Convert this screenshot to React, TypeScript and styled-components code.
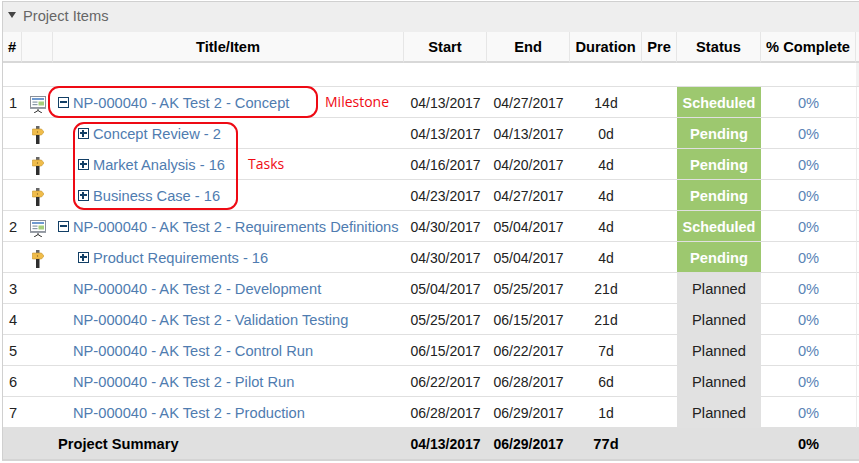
import React from "react";
import styled, { createGlobalStyle } from "styled-components";

const Global = createGlobalStyle`
  html, body { margin: 0; padding: 0; background: #fff; width: 859px; height: 463px; overflow: hidden; }
  * { box-sizing: border-box; }
`;

const Panel = styled.section`
  position: relative;
  width: 859px;
  height: 463px;
  padding: 1px 0 0 2px;
  font-family: "Liberation Sans", Arial, sans-serif;
  font-size: 14.67px;
`;
const Frame = styled.div`
  width: 857px;
  height: 460px;
  border-top: 1px solid #d0d0d0;
  border-left: 1px solid #d0d0d0;
  border-bottom: 2px solid #d4d4d4;
`;
const TitleBar = styled.header`
  height: 30px;
  background: #eeeeee;
  display: flex;
  align-items: center;
  gap: 7px;
  padding: 0 0 2px 5px;
  color: #666;
`;
const Caret = styled.span`
  width: 0;
  height: 0;
  border-left: 4px solid transparent;
  border-right: 4px solid transparent;
  border-top: 6px solid #444;
  margin-top: -2px;
`;
const Table = styled.table`
  width: 856px;
  table-layout: fixed;
  border-collapse: separate;
  border-spacing: 0;
`;
const Th = styled.th<{ $w: number }>`
  width: ${(p) => p.$w}px;
  height: 31px;
  padding: 0;
  background: #f9f9f9;
  font-weight: bold;
  color: #000;
  text-align: center;
  border-right: 1px solid #e6e6e6;
  border-bottom: 2px solid #d8d8d8;
`;
const ThEnd = styled.th`
  width: 3px;
  padding: 0;
  background: #f9f9f9;
  border-bottom: 2px solid #d8d8d8;
`;
const Spacer = styled.td`
  height: 24px;
  padding: 0;
  border-bottom: 1px solid #e0e0e0;
`;
const SpacerEnd = styled.td`
  padding: 0;
  background: #f2f2f2;
  border-bottom: 1px solid #e0e0e0;
`;
const RowEnd = styled.td`
  padding: 0;
  border-left: 1px solid #ececec;
  border-bottom: 1px solid #e0e0e0;
`;
const Td = styled.td<{ $link?: boolean }>`
  height: 31px;
  padding: 1px 0 0;
  color: ${(p) => (p.$link ? "#5a84b6" : "#222")};
  text-align: center;
  border-bottom: 1px solid #e0e0e0;
  white-space: nowrap;
  font-size: ${(p) => (p.$link ? "14.67px" : "14px")};
`;
const NumCell = styled(Td)`
  text-align: left;
  padding-left: 6px;
  font-size: 14.67px;
`;
const IconCell = styled(Td)`
  padding: 0;
`;
const TitleCell = styled(Td)<{ $child?: boolean }>`
  text-align: left;
  padding-left: ${(p) => (p.$child ? "25px" : "5px")};
  color: #4f7cb0;
  font-size: 14.67px;
`;
const TitleInner = styled.span`
  display: flex;
  align-items: center;
  gap: 4px;
`;
const Toggle = styled.span`
  position: relative;
  flex: none;
  width: 11px;
  height: 11px;
  border: 1.5px solid #123f66;
  background: #fff;
  &::before {
    content: "";
    position: absolute;
    left: 1px;
    right: 1px;
    top: 3px;
    height: 2px;
    background: #123f66;
  }
`;
const TogglePlus = styled(Toggle)`
  &::after {
    content: "";
    position: absolute;
    top: 1px;
    bottom: 1px;
    left: 3px;
    width: 2px;
    background: #123f66;
  }
`;
const TitleSpacer = styled.span`
  width: 11px;
  flex: none;
`;
const StatusCell = styled(Td)<{ $kind: string }>`
  background: ${(p) => (p.$kind === "Planned" ? "#e1e1e1" : "#9dc86f")};
  color: ${(p) => (p.$kind === "Planned" ? "#222" : "#fff")};
  font-weight: ${(p) => (p.$kind === "Planned" ? "normal" : "bold")};
  font-size: ${(p) => (p.$kind === "Scheduled" ? "14.4px" : "14.67px")};
  border-bottom-color: ${(p) => (p.$kind === "Planned" ? "#e1e1e1" : "#e0e0e0")};
`;
const FooterCell = styled.td<{ $small?: boolean }>`
  height: 31px;
  padding: 1px 0 0;
  background: #e0e0e0;
  font-weight: bold;
  color: #000;
  text-align: center;
  font-size: ${(p) => (p.$small ? "14px" : "14.67px")};
`;
const FooterTitle = styled(FooterCell)`
  text-align: left;
  padding-left: 5px;
`;
const Callout = styled.div<{ $l: number; $t: number; $w: number; $h: number }>`
  position: absolute;
  left: ${(p) => p.$l}px;
  top: ${(p) => p.$t}px;
  width: ${(p) => p.$w}px;
  height: ${(p) => p.$h}px;
  border: 2px solid #ee0a14;
  border-radius: 11px;
`;
const Note = styled.div<{ $l: number; $t: number }>`
  position: absolute;
  left: ${(p) => p.$l}px;
  top: ${(p) => p.$t}px;
  color: #f00a14;
  font-family: "Open Sans", sans-serif;
  font-size: 14px;
  line-height: 18px;
`;
const IconBox = styled.svg<{ $drop: number }>`
  display: block;
  margin: ${(p) => p.$drop}px auto 0;
`;

const Board = () => (
  <IconBox $drop={5} width="16" height="17" viewBox="0 0 16 17">
    <rect x="0.5" y="0.5" width="15" height="11" fill="#fff" stroke="#8a8f98" />
    <rect x="2" y="2" width="12" height="2" fill="#6f9ad0" />
    <rect x="2.5" y="5.5" width="5" height="1.2" fill="#8a9aa8" />
    <rect x="2.5" y="8" width="5" height="1.2" fill="#8a9aa8" />
    <rect x="8.5" y="5.5" width="5.5" height="4" fill="#a6cf7c" />
    <rect x="0" y="11.5" width="16" height="1.5" fill="#9aa0a8" />
    <path d="M8 13v1.5M8 14.5l-4 2.5M8 14.5l4 2.5" stroke="#333" strokeWidth="1" fill="none" />
  </IconBox>
);
const Sign = () => (
  <IconBox $drop={3} width="12" height="18" viewBox="0 0 12 18">
    <rect x="4" y="0" width="3.5" height="3" fill="#666" />
    <path d="M0.5 3h9L12 6l-2.5 3h-9Q0 6 0.5 3z" fill="#f0bc4a" stroke="#c4952f" strokeWidth="0.6" />
    <circle cx="5.5" cy="6" r="0.7" fill="#8a6a20" />
    <rect x="4" y="9" width="3.5" height="9" fill="#2e2e2e" />
  </IconBox>
);

type Row = {
  n?: string;
  icon: "board" | "sign" | null;
  title: string;
  toggle: "minus" | "plus" | null;
  start: string;
  end: string;
  dur: string;
  status: string;
};
const rows: Row[] = [
  { n: "1", icon: "board", toggle: "minus", title: "NP-000040 - AK Test 2 - Concept", start: "04/13/2017", end: "04/27/2017", dur: "14d", status: "Scheduled" },
  { icon: "sign", toggle: "plus", title: "Concept Review - 2", start: "04/13/2017", end: "04/13/2017", dur: "0d", status: "Pending" },
  { icon: "sign", toggle: "plus", title: "Market Analysis - 16", start: "04/16/2017", end: "04/20/2017", dur: "4d", status: "Pending" },
  { icon: "sign", toggle: "plus", title: "Business Case - 16", start: "04/23/2017", end: "04/27/2017", dur: "4d", status: "Pending" },
  { n: "2", icon: "board", toggle: "minus", title: "NP-000040 - AK Test 2 - Requirements Definitions", start: "04/30/2017", end: "05/04/2017", dur: "4d", status: "Scheduled" },
  { icon: "sign", toggle: "plus", title: "Product Requirements - 16", start: "04/30/2017", end: "05/04/2017", dur: "4d", status: "Pending" },
  { n: "3", icon: null, toggle: null, title: "NP-000040 - AK Test 2 - Development", start: "05/04/2017", end: "05/25/2017", dur: "21d", status: "Planned" },
  { n: "4", icon: null, toggle: null, title: "NP-000040 - AK Test 2 - Validation Testing", start: "05/25/2017", end: "06/15/2017", dur: "21d", status: "Planned" },
  { n: "5", icon: null, toggle: null, title: "NP-000040 - AK Test 2 - Control Run", start: "06/15/2017", end: "06/22/2017", dur: "7d", status: "Planned" },
  { n: "6", icon: null, toggle: null, title: "NP-000040 - AK Test 2 - Pilot Run", start: "06/22/2017", end: "06/28/2017", dur: "6d", status: "Planned" },
  { n: "7", icon: null, toggle: null, title: "NP-000040 - AK Test 2 - Production", start: "06/28/2017", end: "06/29/2017", dur: "1d", status: "Planned" },
];

export default function App() {
  return (
    <Panel>
      <Global />
      <Frame>
        <TitleBar>
          <Caret />
          Project Items
        </TitleBar>
        <Table>
          <thead>
            <tr>
              <Th $w={19}>#</Th>
              <Th $w={31}></Th>
              <Th $w={351}>Title/Item</Th>
              <Th $w={83}>Start</Th>
              <Th $w={83}>End</Th>
              <Th $w={72}>Duration</Th>
              <Th $w={35}>Pre</Th>
              <Th $w={84}>Status</Th>
              <Th $w={95}>% Complete</Th>
              <ThEnd />
            </tr>
          </thead>
          <tbody>
            <tr>
              <Spacer colSpan={9} />
              <SpacerEnd />
            </tr>
            {rows.map((r, i) => (
              <tr key={i}>
                <NumCell>{r.n}</NumCell>
                <IconCell>{r.icon === "board" ? <Board /> : r.icon === "sign" ? <Sign /> : null}</IconCell>
                <TitleCell $child={r.toggle === "plus"}>
                  <TitleInner>
                    {r.toggle === "minus" && <Toggle />}
                    {r.toggle === "plus" && <TogglePlus />}
                    {r.toggle === null && <TitleSpacer />}
                    {r.title}
                  </TitleInner>
                </TitleCell>
                <Td>{r.start}</Td>
                <Td>{r.end}</Td>
                <Td>{r.dur}</Td>
                <Td />
                <StatusCell $kind={r.status}>{r.status}</StatusCell>
                <Td $link>0%</Td>
                <RowEnd />
              </tr>
            ))}
            <tr>
              <FooterCell />
              <FooterCell />
              <FooterTitle>Project Summary</FooterTitle>
              <FooterCell $small>04/13/2017</FooterCell>
              <FooterCell $small>06/29/2017</FooterCell>
              <FooterCell>77d</FooterCell>
              <FooterCell />
              <FooterCell />
              <FooterCell>0%</FooterCell>
              <FooterCell />
            </tr>
          </tbody>
        </Table>
      </Frame>
      <Callout $l={48} $t={86} $w={270} $h={32} />
      <Callout $l={73} $t={122} $w={165} $h={88} />
      <Note $l={325} $t={93}>Milestone</Note>
      <Note $l={248} $t={155}>Tasks</Note>
    </Panel>
  );
}
